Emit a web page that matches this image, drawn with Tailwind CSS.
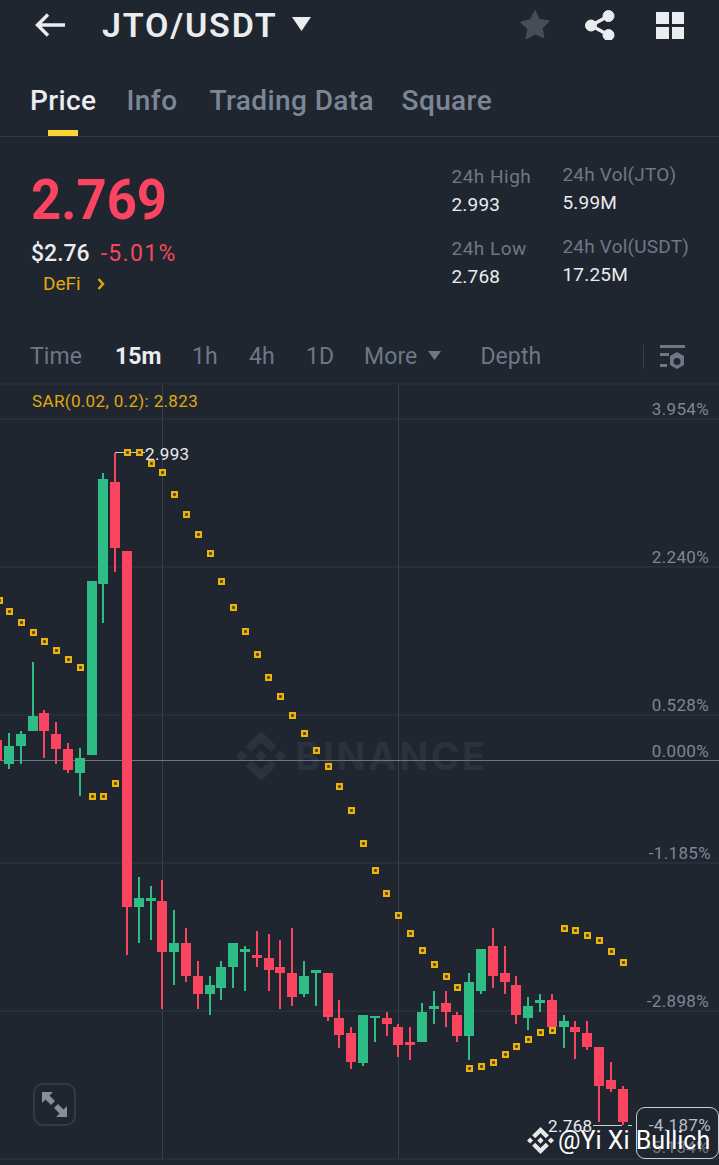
<!DOCTYPE html>
<html lang="en">
<head>
  <meta charset="UTF-8" />
  <meta name="viewport" content="width=device-width, initial-scale=1.0" />
  <title>JTO/USDT</title>
  <script src="https://cdn.jsdelivr.net/npm/@tailwindcss/browser@4"></script>
</head>
<body class="bg-[#1f2630] font-['Roboto','Noto_Sans',sans-serif] w-[719px] h-[1165px] overflow-hidden">

  <!-- Top bar -->
  <header class="h-[50px] flex items-center pl-[35px] pr-[35px]">
    <svg class="w-[30px] h-[24px]" viewBox="0 0 30 24" fill="none" stroke="#eaecef" stroke-width="3.4">
      <path d="M30 12H3M13 1.5 2.5 12 13 22.5" />
    </svg>
    <h1 class="ml-[37px] text-[34px] leading-none font-semibold text-[#eaecef] tracking-[1.8px]">JTO/USDT</h1>
    <svg class="ml-[15px] w-[19px] h-[14px] mb-[3px]" viewBox="0 0 19 14" fill="#eaecef"><path d="M0 0h19L9.5 14z" /></svg>
    <svg class="ml-auto w-[30px] h-[30px]" viewBox="0 0 30 30" fill="#474d57" stroke="#474d57" stroke-width="2" stroke-linejoin="round"><path d="M15 1.500l4 8.500 9.500 1.200-7 6.500 1.900 9.300L15 23.400l-8.400 4.600 1.900-9.300-7-6.500L11 10z" /></svg>
    <svg class="ml-[35px] w-[30px] h-[30px]" viewBox="0 0 30 30" fill="#eaecef" stroke="#eaecef">
      <circle cx="23.500" cy="6" r="5.500" /><circle cx="6" cy="15.500" r="5.500" /><circle cx="23.500" cy="25" r="5.500" />
      <path stroke-width="3.500" d="M23.500 6 6 15.500 23.500 25" fill="none" />
    </svg>
    <div class="ml-[41px] w-[28px] h-[27px] grid grid-cols-2 gap-[3px]">
      <div class="bg-[#eaecef]"></div><div class="bg-[#eaecef]"></div><div class="bg-[#eaecef]"></div><div class="bg-[#eaecef]"></div>
    </div>
  </header>

  <!-- Tabs -->
  <nav class="h-[87px] border-b border-[#323844] pl-[30px] pt-[33px] flex gap-[30px] text-[28px] leading-[36px] font-medium tracking-[0.4px] text-[#7d8695]">
    <div class="relative text-[#eaecef]">Price<span class="absolute left-[18px] top-[47px] w-[30px] h-[6px] bg-[#fcd535]"></span></div>
    <div class="w-[53px]">Info</div>
    <div class="w-[162px] whitespace-nowrap">Trading Data</div>
    <div>Square</div>
  </nav>

  <!-- Price summary -->
  <section class="h-[197px] relative pl-[31px] flex justify-between">
    <div class="pt-[35px]">
      <div class="text-[56px] leading-[56px] font-bold text-[#fb4560] origin-left scale-x-[0.94]">2.769</div>
      <div class="mt-[11px] flex gap-[11px] text-[23px] leading-[30px] font-medium">
        <span class="text-[#eaecef]">$2.76</span><span class="text-[#f6465d] font-normal tracking-[1.3px]">-5.01%</span>
      </div>
      <div class="ml-[12px] mt-[3px] flex items-center gap-[16px] text-[19px] leading-[24px] text-[#e0a90f]">
        DeFi
        <svg class="w-[8px] h-[12px]" viewBox="0 0 8 12" fill="none" stroke="#e0a90f" stroke-width="2.400"><path d="M1.500 1 6 6l-4.500 5" /></svg>
      </div>
    </div>
    <div class="flex pr-[30px] text-[19px] leading-[26px] tracking-[0.2px] text-[#6f7786]">
      <div class="w-[111px] pt-[27px] tracking-[0.5px]">
        <div>24h High</div>
        <div class="text-[#eaecef] mt-[2px] tracking-[0.2px]">2.993</div>
        <div class="mt-[18px]">24h Low</div>
        <div class="text-[#eaecef] mt-[2px] tracking-[0.2px]">2.768</div>
      </div>
      <div class="pt-[25px]">
        <div>24h Vol(JTO)</div>
        <div class="text-[#eaecef] mt-[2px]">5.99M</div>
        <div class="mt-[18px]">24h Vol(USDT)</div>
        <div class="text-[#eaecef] mt-[2px]">17.25M</div>
      </div>
    </div>
  </section>

  <!-- Interval row -->
  <div class="h-[51px] pl-[30px] pb-[3px] flex items-center text-[23px] tracking-[0.1px] text-[#6f7786] border-b-2 border-[#272d38]">
    <span class="w-[85px]">Time</span>
    <span class="w-[77px] text-[#eaecef] font-bold">15m</span>
    <span class="w-[57px]">1h</span>
    <span class="w-[57px]">4h</span>
    <span class="w-[58px]">1D</span>
    <span>More</span>
    <svg class="ml-[11px] mb-[4px] w-[13px] h-[9px]" viewBox="0 0 13 9" fill="#6f7786"><path d="M0 0h13L6.500 9z" /></svg>
    <span class="ml-[39px]">Depth</span>
    <span class="ml-[102px] w-px h-[24px] bg-[#3a404c]"></span>
    <svg class="ml-[16px] w-[25px] h-[25px]" viewBox="0 0 25 25" fill="#6f7786">
      <path d="M0 0h25v3H0zM0 8h9v3H0zM0 19h7v3H0z" />
      <path fill-rule="evenodd" d="M17 7l7 4v9l-7 4-7-4v-9zm0 6a3 3 0 1 0 0 7 3 3 0 1 0 0-7z" />
    </svg>
  </div>

  <!-- Chart -->
  <div id="chart" class="relative h-[780px] text-[17px] leading-[20px] tracking-[0.35px] text-[#7d8695]">
    <!-- watermark sits under the plot -->
    <div class="absolute left-[236px] top-[346px] flex items-center gap-[9px] text-[#2c323d]">
      <svg class="w-[50px] h-[50px]" viewBox="0 0 24 24" fill="#2c323d"><path d="M7.300 10.080 12 5.400l4.700 4.700 2.740-2.740L12 0 4.560 7.340zM0 12l2.740-2.740L5.480 12l-2.740 2.740zm7.300 1.920 4.700 4.700 4.700-4.700 2.740 2.730L12 24l-7.440-7.360zM18.520 12l2.740-2.740L24 12l-2.740 2.740zm-3.740 0L12 14.780 9.220 12 12 9.220z" /></svg>
      <span class="text-[38px] leading-none font-bold tracking-[2.8px] font-['Inter',sans-serif]">BINANCE</span>
    </div>

    <svg id="plot" class="absolute left-0 top-0" width="719" height="780" viewBox="0 385 719 780"></svg>

    <span class="absolute left-[32px] top-[6px] text-[#e0a90f]">SAR(0.02, 0.2): 2.823</span>
    <span class="absolute right-[10px] top-[14px]">3.954%</span>
    <span class="absolute right-[10px] top-[162px]">2.240%</span>
    <span class="absolute right-[10px] top-[310px]">0.528%</span>
    <span class="absolute right-[10px] top-[356px]">0.000%</span>
    <span class="absolute right-[8px] top-[458px]">-1.185%</span>
    <span class="absolute right-[10px] top-[606px]">-2.898%</span>
    <span class="absolute left-[145px] top-[59px] text-[#eaecef]">2.993</span>

    <button class="absolute left-[33px] top-[698px] w-[43px] h-[43px] rounded-[10px] border-2 border-[#343a46] flex items-center justify-center">
      <svg class="w-[25px] h-[25px]" viewBox="0 0 25 25" fill="#848e9c">
        <path d="M0 0h11L7.500 3.500 13 9l-4 4-5.500-5.500L0 11zM25 25H14l3.500-3.500L12 16l4-4 5.500 5.500L25 14z" />
      </svg>
    </button>

    <span class="absolute left-[548px] top-[731px] text-[#eaecef]">2.768</span>
    <span class="absolute right-[10px] top-[752px] text-[#6f7786]">-5.134%</span>
    <div class="absolute left-[636px] top-[722px] w-[83px] h-[52px] rounded-[9px] border border-[#c9ccd2] text-[#b7bdc6]">
      <span class="absolute right-[7px] top-[7px]">-4.187%</span>
    </div>
    <div class="absolute left-[527px] top-[742px] flex items-center gap-[4px] text-[25px] leading-[27px] tracking-normal text-white whitespace-nowrap">
      <svg class="w-[27px] h-[27px]" viewBox="0 0 24 24" fill="#e8e8e8"><path d="M7.300 10.080 12 5.400l4.700 4.700 2.740-2.740L12 0 4.560 7.340zM0 12l2.740-2.740L5.480 12l-2.740 2.740zm7.300 1.920 4.700 4.700 4.700-4.700 2.740 2.730L12 24l-7.440-7.360zM18.520 12l2.740-2.740L24 12l-2.740 2.740zm-3.740 0L12 14.780 9.220 12 12 9.220z" /></svg>
      <span>@Yi Xi Bullich</span>
    </div>
  </div>

  <script>
    const GREEN = '#2ebd85', RED = '#fb4560', GOLD = '#ecb40b';

    // [color, wick top, body top, body bottom, wick bottom], one per 15m bar, page y pixels
    const candles = [
      [RED, 740, 740, 761, 761],
      [GREEN, 733, 746, 764, 769], [GREEN, 731, 734, 746, 764], [GREEN, 662, 716, 731, 731],
      [RED, 710, 713, 731, 758], [RED, 722, 734, 749, 764], [RED, 743, 749, 770, 773],
      [GREEN, 748, 758, 773, 796], [GREEN, 581, 581, 755, 755], [GREEN, 473, 479, 584, 623],
      [RED, 453, 482, 548, 572], [RED, 551, 551, 907, 955], [GREEN, 877, 898, 907, 943],
      [GREEN, 886, 898, 901, 940], [RED, 880, 901, 952, 1009], [GREEN, 910, 943, 952, 985],
      [RED, 928, 943, 976, 982], [RED, 961, 976, 994, 1009], [GREEN, 976, 985, 994, 1015],
      [GREEN, 961, 967, 988, 1000], [GREEN, 943, 943, 967, 988], [GREEN, 946, 949, 952, 991],
      [RED, 931, 955, 958, 967], [RED, 934, 958, 970, 991], [RED, 940, 967, 973, 1009],
      [RED, 928, 973, 997, 1006], [GREEN, 961, 976, 994, 997], [GREEN, 970, 970, 973, 1006],
      [RED, 973, 973, 1017, 1021], [RED, 1000, 1018, 1035, 1048], [RED, 1027, 1033, 1062, 1069],
      [GREEN, 1015, 1015, 1063, 1066], [GREEN, 1016, 1016, 1018, 1042], [RED, 1012, 1018, 1024, 1036],
      [RED, 1024, 1027, 1045, 1057], [RED, 1027, 1042, 1045, 1060], [GREEN, 1003, 1012, 1042, 1042],
      [GREEN, 991, 1006, 1009, 1024], [RED, 991, 1003, 1012, 1027], [RED, 1012, 1015, 1036, 1042],
      [GREEN, 973, 982, 1036, 1060], [GREEN, 949, 949, 991, 994], [RED, 928, 946, 976, 988],
      [RED, 946, 973, 982, 994], [RED, 976, 985, 1015, 1024], [GREEN, 997, 1006, 1018, 1030],
      [GREEN, 994, 1000, 1003, 1012], [RED, 994, 1000, 1027, 1027], [GREEN, 1015, 1021, 1027, 1048],
      [RED, 1021, 1027, 1032, 1059], [RED, 1021, 1033, 1047, 1050], [RED, 1047, 1047, 1086, 1122],
      [RED, 1062, 1080, 1089, 1092], [RED, 1086, 1089, 1122, 1125],
    ];

    const sar = [
      [-1, 600], [9, 611], [21, 622], [33, 632], [44, 641], [56, 650], [68, 659], [80, 667],
      [92, 796], [103, 796], [115, 783],
      [127, 452], [139, 452], [151, 463], [162, 472], [174, 494], [186, 514], [198, 534], [210, 553],
      [221, 581], [233, 607], [245, 631], [257, 654], [268, 677], [280, 696], [292, 715], [304, 733],
      [316, 750], [328, 766], [339, 786], [351, 810], [363, 843], [375, 870], [386, 893], [398, 915],
      [410, 933], [422, 950], [434, 964], [446, 976], [457, 987],
      [469, 1068], [481, 1066], [493, 1062], [505, 1054], [516, 1046], [528, 1039], [540, 1032], [552, 1030],
      [564, 928], [575, 930], [587, 935], [599, 940], [611, 951], [623, 962],
    ];

    let out = '';

    // grid
    [419, 567, 715, 863, 1011, 1159].forEach(y => {
      out += `<rect x="0" y="${y - 1}" width="719" height="2" fill="#282e39" />`;
    });
    [162, 398].forEach(x => {
      out += `<rect x="${x}" y="385" width="1" height="774" fill="#383e4a" />`;
    });
    out += `<rect x="0" y="760" width="719" height="1" fill="#6e7582" />`;

    // candles
    candles.forEach((c, i) => {
      const x = Math.round(-2.8 + 11.8 * i);
      out += `<rect x="${x - 1}" y="${c[1]}" width="2" height="${c[4] - c[1]}" fill="${c[0]}" />`;
      out += `<rect x="${x - 5}" y="${c[2]}" width="10" height="${Math.max(c[3] - c[2], 2)}" fill="${c[0]}" />`;
    });

    // price markers
    out += `<path d="M115 452.500H145M593 1125.500H622M628 1125.500H632" stroke="#c9ccd2" stroke-width="1" fill="none" />`;

    // SAR dots
    sar.forEach(([x, y]) => {
      out += `<rect x="${x - 3}" y="${y - 3}" width="7" height="7" fill="${GOLD}" />`;
      out += `<rect x="${x - 1}" y="${y - 1}" width="3" height="3" fill="#6b5a16" />`;
      out += `<rect x="${x}" y="${y}" width="1" height="1" fill="#1f2630" />`;
    });

    document.getElementById('plot').innerHTML = out;
  </script>
</body>
</html>
